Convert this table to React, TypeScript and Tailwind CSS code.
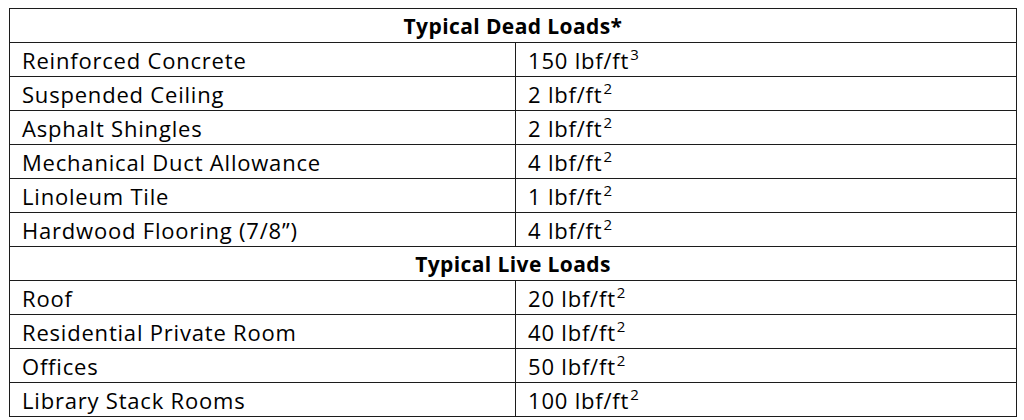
const dead: [string, string, string][] = [
  ["Reinforced Concrete", "150 lbf/ft", "3"],
  ["Suspended Ceiling", "2 lbf/ft", "2"],
  ["Asphalt Shingles", "2 lbf/ft", "2"],
  ["Mechanical Duct Allowance", "4 lbf/ft", "2"],
  ["Linoleum Tile", "1 lbf/ft", "2"],
  ["Hardwood Flooring (7/8\u201d)", "4 lbf/ft", "2"],
];

const live: [string, string, string][] = [
  ["Roof", "20 lbf/ft", "2"],
  ["Residential Private Room", "40 lbf/ft", "2"],
  ["Offices", "50 lbf/ft", "2"],
  ["Library Stack Rooms", "100 lbf/ft", "2"],
];

function Heading({ text }: { text: string }) {
  return (
    <div className="col-span-2 flex h-[34px] items-center justify-center border-b border-[#1c1c1c] pt-[2px] text-[21px] font-bold tracking-[0.4px]">
      {text}
    </div>
  );
}

function Row({ name, value, sup }: { name: string; value: string; sup: string }) {
  return (
    <>
      <div className="flex h-[34px] items-center border-b border-r border-[#1c1c1c] pl-[12px] pt-[2px]">
        {name}
      </div>
      <div className="flex h-[34px] items-center border-b border-[#1c1c1c] pl-[12px] pt-[2px]">
        <span>
          {value}
          <sup className="relative top-[-9px] ml-[1px] align-baseline text-[15px]">{sup}</sup>
        </span>
      </div>
    </>
  );
}

export default function App() {
  return (
    <div className="h-[420px] w-[1024px] bg-white pl-[9px] pt-[8px] text-[22px] tracking-[0.8px] text-black" style={{ fontFamily: "'Open Sans', sans-serif" }}>
      <div className="grid w-[1008px] grid-cols-[506px_1fr] border-l border-r border-t border-[#1c1c1c]">
        <Heading text="Typical Dead Loads*" />
        {dead.map(([n, v, s]) => (
          <Row key={n} name={n} value={v} sup={s} />
        ))}
        <Heading text="Typical Live Loads" />
        {live.map(([n, v, s]) => (
          <Row key={n} name={n} value={v} sup={s} />
        ))}
      </div>
    </div>
  );
}
